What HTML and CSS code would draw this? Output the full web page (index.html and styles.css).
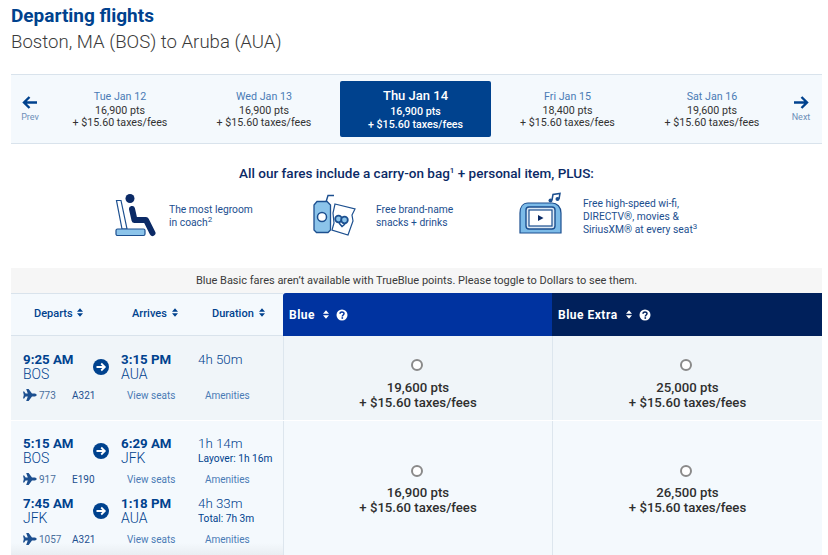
FILE: index.html
```html
<!DOCTYPE html>
<html lang="en">
<head>
  <meta charset="UTF-8">
  <title>Departing flights</title>
  <meta name="viewport" content="width=device-width,initial-scale=1.0">
  <link rel="stylesheet" href="styles.css">
</head>
<body>
<svg class="defs" width="0" height="0" aria-hidden="true">
  <symbol id="plane" viewBox="0 0 14 12">
    <path d="M13.800 6C13.800 5.100 12.400 4.500 11 4.500H9L5.600 0H3.200L4.800 4.500H2.600L1.200 2.600H0L.8 6 0 9.400H1.200L2.600 7.500H4.800L3.200 12H5.600L9 7.500H11C12.400 7.500 13.800 6.900 13.800 6Z"/>
  </symbol>
  <symbol id="go" viewBox="0 0 16 16">
    <circle cx="8" cy="8" r="8"/>
    <path d="M3.500 8H11.500M8.200 4.500 11.800 8 8.200 11.500" fill="none" stroke="#fff" stroke-width="1.800"/>
  </symbol>
  <symbol id="sort" viewBox="0 0 7 10">
    <path d="M3.500 0 7 4H0ZM0 6H7L3.500 10Z"/>
  </symbol>
  <symbol id="help" viewBox="0 0 12 12">
    <circle cx="6" cy="6" r="5.500" fill="#fff"/>
    <path d="M4 4.800C4 2.400 8 2.400 8 4.600 8 6 6.300 6 6.300 7.400" fill="none" stroke="currentColor" stroke-width="1.500"/>
    <rect x="5.500" y="8.200" width="1.600" height="1.600" fill="currentColor"/>
  </symbol>
</svg>

<div class="head">
  <h1>Departing flights</h1>
  <h2>Boston, MA (BOS) to Aruba (AUA)</h2>
</div>

<div class="dates">
  <a class="nav">
    <svg width="16" height="13" viewBox="0 0 16 13"><path d="M15 6.500H2.500M7.500 1 2 6.500 7.500 12" fill="none" stroke="#00428e" stroke-width="2.400"/></svg>
    <span>Prev</span>
  </a>
  <div class="day day-a">
    <b>Tue Jan 12</b>
    <p>16,900 pts<br>+ $15.60 taxes/fees</p>
  </div>
  <div class="day day-b">
    <b>Wed Jan 13</b>
    <p>16,900 pts<br>+ $15.60 taxes/fees</p>
  </div>
  <div class="day on">
    <b>Thu Jan 14</b>
    <p>16,900 pts<br>+ $15.60 taxes/fees</p>
  </div>
  <div class="day day-c">
    <b>Fri Jan 15</b>
    <p>18,400 pts<br>+ $15.60 taxes/fees</p>
  </div>
  <div class="day day-d">
    <b>Sat Jan 16</b>
    <p>19,600 pts<br>+ $15.60 taxes/fees</p>
  </div>
  <a class="nav nav-next">
    <svg width="16" height="13" viewBox="0 0 16 13"><path d="M1 6.500H13.500M8.500 1 14 6.500 8.500 12" fill="none" stroke="#00428e" stroke-width="2.400"/></svg>
    <span>Next</span>
  </a>
</div>

<div class="fares">
  <h3>All our fares include a carry-on bag<sup>1</sup> + personal item, PLUS:</h3>
  <div class="perks">
    <div class="perk perk-seat">
      <svg width="43" height="43" viewBox="0 0 43 43">
        <path d="M2.500 6.500H7L13 35H8Z" fill="#fff" stroke="#1c4f8f" stroke-width="1.200"/>
        <rect x="2" y="35" width="29" height="6.500" rx="1.500" fill="#8cc4ea" stroke="#1c4f8f" stroke-width="1.200"/>
        <circle cx="16" cy="4.500" r="4.500" fill="#0b2a66"/>
        <path d="M18 15 20.500 26H32L38.500 39" fill="none" stroke="#0b2a66" stroke-width="6" stroke-linecap="round" stroke-linejoin="round"/>
      </svg>
      <p>The most legroom<br>in coach<sup>2</sup></p>
    </div>
    <div class="perk perk-snack">
      <svg width="44" height="43" viewBox="0 0 44 43">
        <path d="M14 8 16 1.500H22" fill="none" stroke="#1c4f8f" stroke-width="1.400"/>
        <path d="M5 7.500H15L18.500 11V36L16 38.500H4.500L2 36V11Z" fill="#8cc4ea" stroke="#1c4f8f" stroke-width="1.300"/>
        <circle cx="10" cy="23" r="4.500" fill="#fff" stroke="#1c4f8f" stroke-width="1.500"/>
        <path d="M23 10 43 15 40 21 41 27 36 41 20 36 22 29 21 19Z" fill="#fff" stroke="#1c4f8f" stroke-width="1.200"/>
        <circle cx="26.500" cy="25" r="3.300" fill="#8cc4ea" stroke="#1c4f8f" stroke-width="1.800"/>
        <circle cx="32.500" cy="26" r="3.300" fill="#8cc4ea" stroke="#1c4f8f" stroke-width="1.800"/>
        <path d="M27 29 30.500 33M33 30 29.500 33" stroke="#1c4f8f" stroke-width="1.600"/>
      </svg>
      <p>Free brand-name<br>snacks + drinks</p>
    </div>
    <div class="perk perk-tv">
      <svg width="43" height="46" viewBox="0 0 43 46">
        <path d="M33 8 34 2.500 41 1.500 40 7" fill="none" stroke="#1c4f8f" stroke-width="1.500"/>
        <circle cx="31.500" cy="8.500" r="2" fill="#1c4f8f"/>
        <circle cx="38.500" cy="7" r="2" fill="#1c4f8f"/>
        <path d="M9 11H33C38 11 42 15 42 21V41H1V21C1 15 4 11 9 11Z" fill="#7cbbe8" stroke="#1c4f8f" stroke-width="1.200"/>
        <rect x="7" y="15" width="29" height="22" rx="3" fill="#dce9f5" stroke="#1c4f8f" stroke-width="1.400"/>
        <rect x="10" y="18" width="23" height="16" fill="#fff" stroke="#1c4f8f" stroke-width="1.200"/>
        <path d="M19 23 24.500 26 19 29Z" fill="#0b2a66"/>
      </svg>
      <p>Free high-speed wi-fi,<br>DIRECTV®, movies &amp;<br>SiriusXM® at every seat<sup>3</sup></p>
    </div>
  </div>
</div>

<div class="table">
  <div class="notice">Blue Basic fares aren’t available with TrueBlue points. Please toggle to Dollars to see them.</div>
  <div class="thead">
    <div class="sorts">
      <span class="s-dep">Departs <svg width="6" height="9"><use href="#sort"/></svg></span>
      <span class="s-arr">Arrives <svg width="6" height="9"><use href="#sort"/></svg></span>
      <span class="s-dur">Duration <svg width="6" height="9"><use href="#sort"/></svg></span>
    </div>
    <div class="fare-h blue">Blue <svg class="srt" width="6" height="9"><use href="#sort"/></svg> <svg class="hlp" width="12" height="12"><use href="#help"/></svg></div>
    <div class="fare-h extra">Blue Extra <svg class="srt" width="6" height="9"><use href="#sort"/></svg> <svg class="hlp" width="12" height="12"><use href="#help"/></svg></div>
  </div>

  <div class="row row-1">
    <div class="legs">
      <div class="leg">
        <div class="times">
          <div class="t"><b>9:25 AM</b>BOS</div>
          <svg class="go" width="16" height="16"><use href="#go"/></svg>
          <div class="t"><b>3:15 PM</b>AUA</div>
          <div class="dur">4h 50m</div>
        </div>
        <div class="sub">
          <span class="fl"><svg width="14" height="12"><use href="#plane"/></svg>773</span>
          <span class="eq">A321</span>
          <span class="lk">View seats</span>
          <span class="lk am">Amenities</span>
        </div>
      </div>
    </div>
    <div class="cell"><i class="radio"></i><p>19,600 pts<br>+ $15.60 taxes/fees</p></div>
    <div class="cell"><i class="radio"></i><p>25,000 pts<br>+ $15.60 taxes/fees</p></div>
  </div>

  <div class="row row-2">
    <div class="legs">
      <div class="leg">
        <div class="times">
          <div class="t"><b>5:15 AM</b>BOS</div>
          <svg class="go" width="16" height="16"><use href="#go"/></svg>
          <div class="t"><b>6:29 AM</b>JFK</div>
          <div class="dur">1h 14m<small>Layover: 1h 16m</small></div>
        </div>
        <div class="sub">
          <span class="fl"><svg width="14" height="12"><use href="#plane"/></svg>917</span>
          <span class="eq">E190</span>
          <span class="lk">View seats</span>
          <span class="lk am">Amenities</span>
        </div>
      </div>
      <div class="leg">
        <div class="times">
          <div class="t"><b>7:45 AM</b>JFK</div>
          <svg class="go" width="16" height="16"><use href="#go"/></svg>
          <div class="t"><b>1:18 PM</b>AUA</div>
          <div class="dur">4h 33m<small>Total: 7h 3m</small></div>
        </div>
        <div class="sub">
          <span class="fl"><svg width="14" height="12"><use href="#plane"/></svg>1057</span>
          <span class="eq">A321</span>
          <span class="lk">View seats</span>
          <span class="lk am">Amenities</span>
        </div>
      </div>
    </div>
    <div class="cell"><i class="radio"></i><p>16,900 pts<br>+ $15.60 taxes/fees</p></div>
    <div class="cell"><i class="radio"></i><p>26,500 pts<br>+ $15.60 taxes/fees</p></div>
  </div>
</div>
</body>
</html>
```

FILE: styles.css
```css
*{
  margin: 0;
  padding: 0;
  box-sizing: border-box;
}
html,body{
  height: 555px;
  overflow: hidden;
}
body{
  background: #fff;
  font-family: Roboto, "Liberation Sans", sans-serif;
  color: #333;
}
.defs{
  position: absolute;
}
sup{
  font-size: 8px;
  line-height: 0;
}

/* title */
.head{
  padding: 5px 0 0 11px;
  height: 74px;
}
h1{
  font-size: 19px;
  line-height: 22px;
  font-weight: 700;
  color: #00428e;
}
h2{
  font-size: 18.600px;
  line-height: 30px;
  font-weight: 300;
  color: #3a3a3a;
}

/* date bar */
.dates{
  display: flex;
  align-items: center;
  margin: 0 6px 0 11px;
  height: 70px;
  background: #f4f9fd;
  border-top: 1px solid #d9e3ec;
  border-bottom: 1px solid #d9e3ec;
  position: relative;
}
.nav{
  width: 38px;
  display: flex;
  flex-direction: column;
  align-items: center;
  font-size: 9px;
  color: #6d8fb8;
  gap: 3px;
  flex-shrink: 0;
}
.nav-next{
  margin-left: -1px;
}
.day{
  text-align: center;
  font-size: 10.700px;
  line-height: 12.500px;
  color: #333;
  flex-shrink: 0;
}
.day b{
  display: block;
  font-weight: 400;
  color: #4a7bb5;
  line-height: 15px;
  margin-bottom: 1px;
}
.day-a{
  width: 140px;
  margin-left: 1px;
}
.day-b{
  width: 148px;
}
.day-c{
  width: 147px;
  margin-left: 3px;
}
.day-d{
  width: 142px;
}
.on{
  width: 151px;
  height: 56px;
  margin: 0 0 0 2px;
  padding-top: 7px;
  background: #00428e;
  border-radius: 2px;
  color: #fff;
  font-weight: 500;
}
.on b{
  color: #fff;
  font-size: 13px;
  font-weight: 500;
  line-height: 16px;
  margin-bottom: 2px;
}

/* fares */
.fares{
  height: 124px;
}
h3{
  padding-top: 21px;
  text-align: center;
  font-size: 13.500px;
  line-height: 17px;
  font-weight: 500;
  color: #0b2a66;
  margin-left: 5px;
}
.perks{
  display: flex;
  align-items: center;
  margin-top: 8px;
  padding-left: 114px;
  height: 50px;
}
.perk{
  display: flex;
  align-items: center;
  flex-shrink: 0;
}
.perk p{
  font-size: 10.300px;
  line-height: 13px;
  margin-top: 2px;
  color: #1c4f8f;
}
.perk-seat{
  width: 198px;
  gap: 12px;
}
.perk-snack{
  width: 207px;
  gap: 20px;
}
.perk-tv{
  gap: 21px;
}

/* table */
.table{
  margin: 0 6px 0 11px;
}
.notice{
  height: 25px;
  background: #f6f6f6;
  text-align: center;
  font-size: 11px;
  line-height: 25px;
  color: #3a3a3a;
}
.thead,.row{
  display: grid;
  grid-template-columns: 272px 269px 270px;
}
.thead{
  height: 43px;
}
.sorts{
  display: flex;
  align-items: center;
  background: #f4f9fd;
  border-top: 1px solid #d9e3ec;
  border-bottom: 1px solid #d9e3ec;
  font-size: 11px;
  font-weight: 500;
  color: #00428e;
  padding: 0 0 2px 23px;
}
.sorts svg{
  fill: #00428e;
  margin-left: 2px;
}
.s-dep{
  width: 98px;
}
.s-arr{
  width: 80px;
}
.fare-h{
  display: flex;
  align-items: center;
  padding-left: 6px;
  font-size: 12px;
  font-weight: 700;
  color: #fff;
  letter-spacing: .5px;
}
.srt{
  fill: #fff;
  margin: 0 7px 0 8px;
}
.blue{
  background: #0033a0;
  border-radius: 3px 0 0 0;
}
.blue .hlp{
  color: #0033a0;
}
.extra{
  background: #00205b;
}
.extra .hlp{
  color: #00205b;
}

/* flights */
.row-1{
  height: 84px;
  background: #f0f5f9;
}
.row-2{
  height: 135px;
  background: #f4f9fd;
  border-top: 1px solid #fff;
}
.legs{
  padding: 16px 0 0 12px;
}
.row-2 .legs{
  padding-top: 15px;
  background: linear-gradient(to bottom, #f4f9fd 122px, #e9eef2 134px);
}
.leg{
  height: 60px;
}
.times{
  display: flex;
  height: 30px;
}
.t{
  flex: 0 0 60px;
  font-size: 14px;
  line-height: 15px;
  font-weight: 300;
  color: #00428e;
  white-space: nowrap;
}
.t b{
  display: block;
  font-size: 13.300px;
  font-weight: 700;
}
.go{
  fill: #00428e;
  margin: 7px 12px 0 10px;
  flex-shrink: 0;
}
.times .t:nth-of-type(2){
  flex-basis: 77px;
}
.dur{
  font-size: 13.300px;
  line-height: 15px;
  font-weight: 300;
  color: #00428e;
  white-space: nowrap;
}
.dur small{
  display: block;
  font-size: 10.200px;
  font-weight: 400;
  line-height: 16px;
}
.sub{
  display: flex;
  align-items: center;
  height: 14px;
  margin-top: 6px;
  font-size: 10px;
  color: #1c4f8f;
}
.fl{
  width: 49px;
  display: flex;
  align-items: center;
  gap: 2px;
  fill: #1c4f8f;
  color: #4a6f9c;
}
.eq{
  width: 55px;
}
.lk{
  color: #4a7bb5;
  width: 78px;
}
.am{
  width: auto;
}

/* fare cells */
.cell{
  display: flex;
  flex-direction: column;
  align-items: center;
  border-left: 1px solid #dde6ee;
  padding-top: 23px;
}
.row-2 .cell{
  padding-top: 44px;
}
.radio{
  display: block;
  width: 12px;
  height: 12px;
  margin-right: 3px;
  border: 2px solid #8a8a8a;
  border-radius: 50%;
  background: #fff;
}
.cell p{
  margin-top: 9px;
  text-align: center;
  font-size: 13.200px;
  line-height: 15px;
  font-weight: 500;
  color: #2f2f2f;
}
.row-2 .cell p{
  margin-top: 8px;
}
```
